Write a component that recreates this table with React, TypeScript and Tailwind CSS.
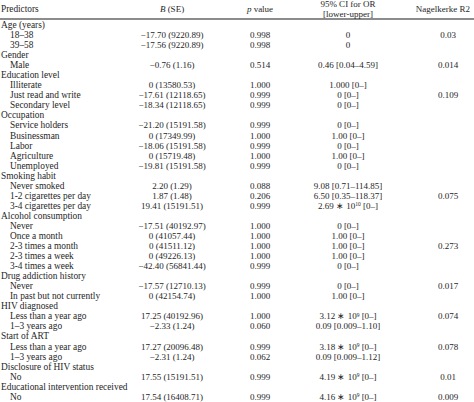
import type { ReactNode } from 'react';

type Row = {
  label: string;
  group?: boolean;
  b?: string;
  p?: string;
  ci?: ReactNode;
  r2?: string;
};

function Sci({ m, e, rest }: { m: string; e: string; rest: string }) {
  return (
    <span>
      {m} ∗ 10<sup className="text-[5.5px]">{e}</sup> {rest}
    </span>
  );
}

const rows: Row[] = [
  { label: 'Age (years)', group: true },
  { label: '18–38', b: '−17.70 (9220.89)', p: '0.998', ci: '0', r2: '0.03' },
  { label: '39–58', b: '−17.56 (9220.89)', p: '0.998', ci: '0' },
  { label: 'Gender', group: true },
  { label: 'Male', b: '−0.76 (1.16)', p: '0.514', ci: '0.46 [0.04–4.59]', r2: '0.014' },
  { label: 'Education level', group: true },
  { label: 'Illiterate', b: '0 (13580.53)', p: '1.000', ci: '1.000 [0–]' },
  { label: 'Just read and write', b: '−17.61 (12118.65)', p: '0.999', ci: '0 [0–]', r2: '0.109' },
  { label: 'Secondary level', b: '−18.34 (12118.65)', p: '0.999', ci: '0 [0–]' },
  { label: 'Occupation', group: true },
  { label: 'Service holders', b: '−21.20 (15191.58)', p: '0.999', ci: '0 [0–]' },
  { label: 'Businessman', b: '0 (17349.99)', p: '1.000', ci: '1.00 [0–]' },
  { label: 'Labor', b: '−18.06 (15191.58)', p: '0.999', ci: '0 [0–]' },
  { label: 'Agriculture', b: '0 (15719.48)', p: '1.000', ci: '1.00 [0–]' },
  { label: 'Unemployed', b: '−19.81 (15191.58)', p: '0.999', ci: '0 [0–]' },
  { label: 'Smoking habit', group: true },
  { label: 'Never smoked', b: '2.20 (1.29)', p: '0.088', ci: '9.08 [0.71–114.85]' },
  { label: '1-2 cigarettes per day', b: '1.87 (1.48)', p: '0.206', ci: '6.50 [0.35–118.37]', r2: '0.075' },
  { label: '3-4 cigarettes per day', b: '19.41 (15191.51)', p: '0.999', ci: <Sci m="2.69" e="10" rest="[0–]" /> },
  { label: 'Alcohol consumption', group: true },
  { label: 'Never', b: '−17.51 (40192.97)', p: '1.000', ci: '0 [0–]' },
  { label: 'Once a month', b: '0 (41057.44)', p: '1.000', ci: '1.00 [0–]' },
  { label: '2-3 times a month', b: '0 (41511.12)', p: '1.000', ci: '1.00 [0–]', r2: '0.273' },
  { label: '2-3 times a week', b: '0 (49226.13)', p: '1.000', ci: '1.00 [0–]' },
  { label: '3-4 times a week', b: '−42.40 (56841.44)', p: '0.999', ci: '0 [0–]' },
  { label: 'Drug addiction history', group: true },
  { label: 'Never', b: '−17.57 (12710.13)', p: '0.999', ci: '0 [0–]', r2: '0.017' },
  { label: 'In past but not currently', b: '0 (42154.74)', p: '1.000', ci: '1.00 [0–]' },
  { label: 'HIV diagnosed', group: true },
  { label: 'Less than a year ago', b: '17.25 (40192.96)', p: '1.000', ci: <Sci m="3.12" e="9" rest="[0–]" />, r2: '0.074' },
  { label: '1–3 years ago', b: '−2.33 (1.24)', p: '0.060', ci: '0.09 [0.009–1.10]' },
  { label: 'Start of ART', group: true },
  { label: 'Less than a year ago', b: '17.27 (20096.48)', p: '0.999', ci: <Sci m="3.18" e="9" rest="[0–]" />, r2: '0.078' },
  { label: '1–3 years ago', b: '−2.31 (1.24)', p: '0.062', ci: '0.09 [0.009–1.12]' },
  { label: 'Disclosure of HIV status', group: true },
  { label: 'No', b: '17.55 (15191.51)', p: '0.999', ci: <Sci m="4.19" e="9" rest="[0–]" />, r2: '0.01' },
  { label: 'Educational intervention received', group: true },
  { label: 'No', b: '17.54 (16408.71)', p: '0.999', ci: <Sci m="4.16" e="9" rest="[0–]" />, r2: '0.009' },
];

const cols = 'grid grid-cols-[124px_96px_80px_96px_78px]';

export default function App() {
  return (
    <div className="w-[474px] h-[402px] overflow-hidden bg-white font-['Liberation_Serif',serif] text-[9px] text-[#262626] whitespace-nowrap">
      <div className={`${cols} -mt-[1.5px] h-[19.5px] items-center leading-[10px]`}>
        <div className="pl-[1px] text-[9.3px]">Predictors</div>
        <div className="text-center">
          <i>B</i> (SE)
        </div>
        <div className="text-center">
          <i>p</i> value
        </div>
        <div className="text-center">
          95% CI for OR
          <br />
          [lower-upper]
        </div>
        <div className="text-right pr-[4px]">Nagelkerke R2</div>
      </div>
      <div className="h-[1.5px] bg-[#8c8c8c] mb-[0.5px]" />
      <div className="flex flex-col">
        {rows.map((r, i) => (
          <div key={i} className={`${cols} h-[10.05px] leading-[10.05px]`}>
            <div className={r.group ? 'pl-[1px] text-[9.4px]' : 'pl-[10px] text-[9.4px]'}>{r.label}</div>
            <div className="text-center">{r.b}</div>
            <div className="text-center">{r.p}</div>
            <div className="text-center">{r.ci}</div>
            <div className="text-center pl-[26px]">{r.r2}</div>
          </div>
        ))}
      </div>
    </div>
  );
}
